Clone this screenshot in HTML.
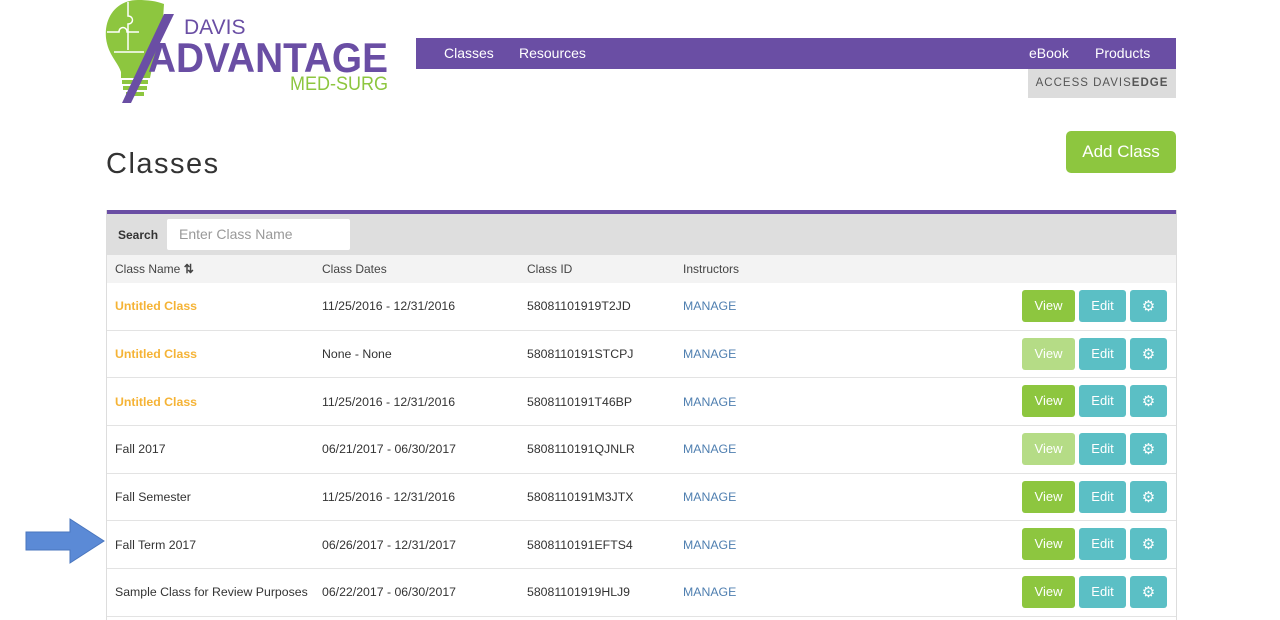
<!DOCTYPE html>
<html><head><style>
body{margin:0;width:1280px;height:610px;overflow:hidden;background:#fff;font-family:"Liberation Sans",sans-serif;position:relative}
.abs{position:absolute}
.nav{left:416px;top:38px;width:760px;height:31px;background:#6a4ea4;color:#fff;font-size:14px}
.nav span{position:absolute;top:7px}
.acc{left:1028px;top:69px;width:148px;height:29px;background:#dcdcdc;color:#555;font-size:11.5px;letter-spacing:1px;text-align:center;line-height:29px}
h1{position:absolute;left:106px;top:148px;margin:0;font-weight:normal;font-size:29px;color:#333;letter-spacing:1.5px}
.add{left:1066px;top:131px;width:110px;height:42px;background:#8dc63f;border-radius:5px;color:#fff;font-size:17px;text-align:center;line-height:42px}
.tbl{left:106px;top:210px;width:1069px;height:410px;border-left:1px solid #ddd;border-right:1px solid #ddd}
.top{height:4px;background:#6a4ea4}
.srch{height:41px;background:#dedede;position:relative}
.srch b{position:absolute;left:11px;top:14px;font-size:12px;color:#333}
.srch .in{position:absolute;left:60px;top:5px;width:183px;height:31px;background:#fff;border-radius:2px;color:#999;font-size:14px;line-height:31px;padding-left:12px;box-sizing:border-box}
.hd{height:28px;background:#f3f3f3;position:relative;font-size:12px;color:#444}
.row{height:46.67px;border-bottom:1px solid #e3e3e3;position:relative;font-size:12.3px;color:#333}
.hd span,.row span{position:absolute;top:50%;transform:translateY(-50%)}
.c1{left:8px}.c2{left:215px}.c3{left:420px}.c4{left:576px}
.m{color:#4f7fb0}
.y{color:#f5b335;font-weight:bold}
.b{position:absolute;top:7px;height:32px;border-radius:3px;color:#fff;font-size:13px;text-align:center;line-height:32px}
.v{left:915px;width:53px;background:#8dc63f}
.v.l{background:#b5dc86}
.e{left:972px;width:47px;background:#5bbfc5}
.g{left:1023px;width:37px;background:#5bbfc5;font-size:15px;font-family:"DejaVu Sans",sans-serif;color:#fff}
</style></head><body>
<svg class="abs" style="left:104px;top:0" width="290" height="105" viewBox="0 0 290 105">
<path d="M34 0 C12 0 0 18 2 38 C4 55 14 62 17 72 L17 78 L46 78 L48 68 L58 35 L60 4 C52 1 44 0 34 0Z" fill="#8dc63f"/>
<path d="M3 32h12c0-6 8-6 8 0h12M24 2v14c6 0 6 8 0 8v12M24 36v14M10 52h30" stroke="#fff" stroke-width="1.5" fill="none"/>
<rect x="18" y="80" width="26" height="4" fill="#8dc63f"/><rect x="19" y="86" width="24" height="4" fill="#8dc63f"/><rect x="22" y="92" width="18" height="4" fill="#8dc63f"/>
<path d="M18 103 L60 14 L70 14 L27 103Z" fill="#6a4ea4"/>
<text x="80" y="34" font-family="Liberation Sans" font-size="21" fill="#6a4ea4">DAVIS</text>
<text x="44" y="72" font-family="Liberation Sans" font-weight="bold" font-size="42" fill="#6a4ea4" textLength="240" lengthAdjust="spacingAndGlyphs">ADVANTAGE</text>
<text x="186" y="90" font-family="Liberation Sans" font-size="19" fill="#8dc63f" textLength="98" lengthAdjust="spacingAndGlyphs">MED-SURG</text>
</svg>
<div class="abs nav"><span style="left:28px">Classes</span><span style="left:103px">Resources</span><span style="left:613px">eBook</span><span style="left:679px">Products</span></div>
<div class="abs acc">ACCESS DAVIS<b>EDGE</b></div>
<h1>Classes</h1>
<div class="abs add">Add Class</div>
<svg class="abs" style="left:24px;top:516px" width="84" height="50"><path d="M2 16h44V3l34 22-34 22V34H2z" fill="#5b8ad6" stroke="#4a76be"/></svg>
<div class="abs tbl">
<div class="top"></div>
<div class="srch"><b>Search</b><div class="in">Enter Class Name</div></div>
<div class="hd"><span class="c1">Class Name <b>⇅</b></span><span class="c2">Class Dates</span><span class="c3">Class ID</span><span class="c4">Instructors</span></div>
<div class="row"><span class="c1 y">Untitled Class</span><span class="c2">11/25/2016 - 12/31/2016</span><span class="c3">58081101919T2JD</span><span class="c4 m">MANAGE</span><div class="b v">View</div><div class="b e">Edit</div><div class="b g">⚙</div></div>
<div class="row"><span class="c1 y">Untitled Class</span><span class="c2">None - None</span><span class="c3">5808110191STCPJ</span><span class="c4 m">MANAGE</span><div class="b v l">View</div><div class="b e">Edit</div><div class="b g">⚙</div></div>
<div class="row"><span class="c1 y">Untitled Class</span><span class="c2">11/25/2016 - 12/31/2016</span><span class="c3">5808110191T46BP</span><span class="c4 m">MANAGE</span><div class="b v">View</div><div class="b e">Edit</div><div class="b g">⚙</div></div>
<div class="row"><span class="c1">Fall 2017</span><span class="c2">06/21/2017 - 06/30/2017</span><span class="c3">5808110191QJNLR</span><span class="c4 m">MANAGE</span><div class="b v l">View</div><div class="b e">Edit</div><div class="b g">⚙</div></div>
<div class="row"><span class="c1">Fall Semester</span><span class="c2">11/25/2016 - 12/31/2016</span><span class="c3">5808110191M3JTX</span><span class="c4 m">MANAGE</span><div class="b v">View</div><div class="b e">Edit</div><div class="b g">⚙</div></div>
<div class="row"><span class="c1">Fall Term 2017</span><span class="c2">06/26/2017 - 12/31/2017</span><span class="c3">5808110191EFTS4</span><span class="c4 m">MANAGE</span><div class="b v">View</div><div class="b e">Edit</div><div class="b g">⚙</div></div>
<div class="row"><span class="c1">Sample Class for Review Purposes</span><span class="c2">06/22/2017 - 06/30/2017</span><span class="c3">58081101919HLJ9</span><span class="c4 m">MANAGE</span><div class="b v">View</div><div class="b e">Edit</div><div class="b g">⚙</div></div>
</div>
</body></html>
